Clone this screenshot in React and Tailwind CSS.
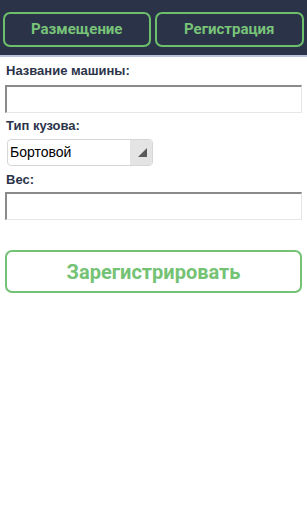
import React, { useState } from 'react';

const App = () => {
  const [form, setForm] = useState({ name: '', body: 'Бортовой', weight: '' });

  return (
    <div className="w-[307px] h-[512px] bg-white" style={{ fontFamily: 'Roboto, "Liberation Sans", sans-serif' }}>
      {/* Top tabs */}
      <div className="bg-[#2b3349] h-[57px] flex gap-[4px] px-[3px] pt-[12px] border-b-[2px] border-[#b9c3dd]">
        <button className="w-[148px] h-[35px] rounded-[7px] border-[2px] border-[#6cc06c] text-[#78c478] font-bold text-[15px]">
          Размещение
        </button>
        <button className="w-[150px] h-[35px] rounded-[7px] border-[2px] border-[#6cc06c] text-[#78c478] font-bold text-[15px]">
          Регистрация
        </button>
      </div>

      <div className="px-[5px]" style={{ fontFamily: '"Liberation Sans", Arial, sans-serif' }}>
        <label className="block pt-[6px] pl-[1px] text-[13px] font-bold text-[#2b3349] leading-[16px]">Название машины:</label>
        <input
          type="text"
          value={form.name}
          onChange={(e) => setForm({ ...form, name: e.target.value })}
          className="mt-[6px] block w-[297px] h-[28px] border-t-[2px] border-l-[2px] border-r border-b border-t-[#8a8a8a] border-l-[#8a8a8a] border-r-[#e6e6e6] border-b-[#e6e6e6] outline-none"
        />

        <label className="block mt-[5px] pl-[1px] text-[13px] font-bold text-[#2b3349] leading-[16px]">Тип кузова:</label>
        <div className="mt-[5px] ml-[2px] w-[146px] h-[27px] flex rounded-[4px] border border-[#d6d6d6] overflow-hidden">
          <div className="flex-1 flex items-center pl-[2px] text-[14px] text-black">{form.body}</div>
          <div className="w-[22px] bg-[#e4e4e4] flex items-end justify-end pr-[5px] pb-[8px]">
            <svg width="9" height="9" viewBox="0 0 9 9">
              <polygon points="9,0 9,9 0,9" fill="#5a5a5a" />
            </svg>
          </div>
        </div>

        <label className="block mt-[6px] pl-[1px] text-[13px] font-bold text-[#2b3349] leading-[16px]">Вес:</label>
        <input
          type="text"
          value={form.weight}
          onChange={(e) => setForm({ ...form, weight: e.target.value })}
          className="mt-[4px] block w-[297px] h-[28px] border-t-[2px] border-l-[2px] border-r border-b border-t-[#8a8a8a] border-l-[#8a8a8a] border-r-[#e6e6e6] border-b-[#e6e6e6] outline-none"
        />

        <button className="mt-[30px] w-[297px] h-[43px] rounded-[7px] border-[2px] border-[#74c274] text-[#74c274] font-bold text-[20px]" style={{ fontFamily: 'Roboto, sans-serif' }}>
          Зарегистрировать
        </button>
      </div>
    </div>
  );
};

export default App;
